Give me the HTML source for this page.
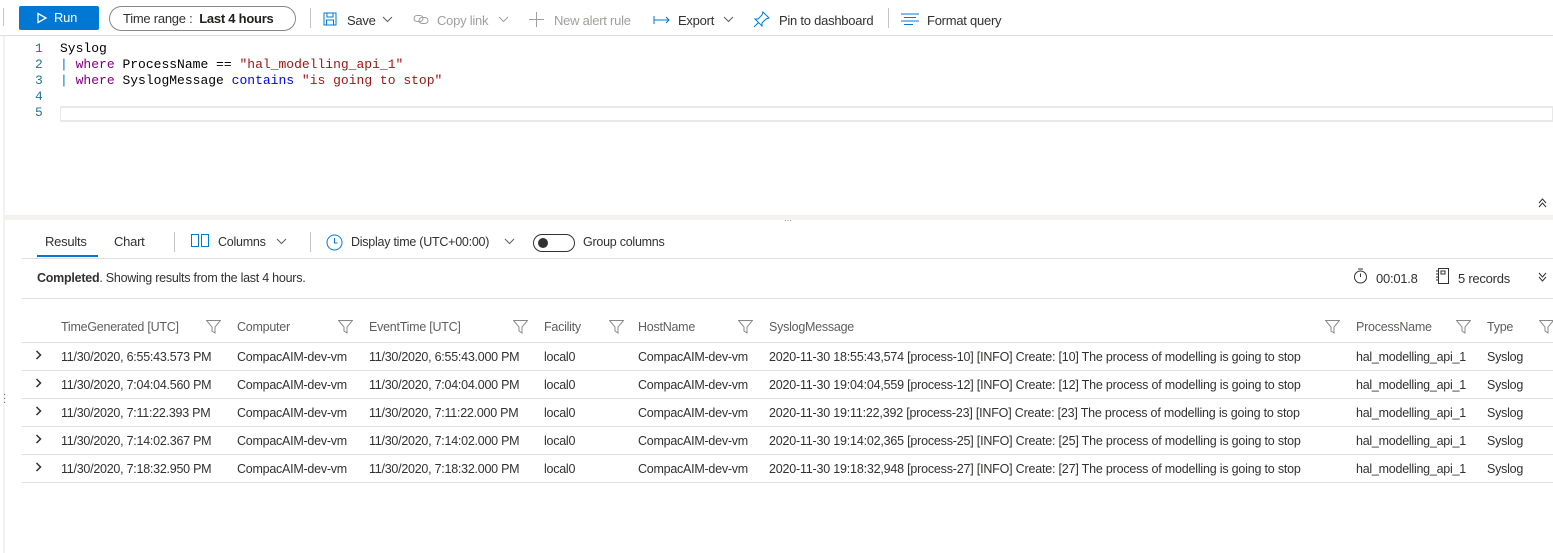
<!DOCTYPE html>
<html><head><meta charset="utf-8"><style>
*{box-sizing:border-box;margin:0;padding:0}
body{width:1553px;height:553px;background:#fff;position:relative;overflow:hidden;font-family:"Liberation Sans",sans-serif;font-size:12.5px;color:#323130;letter-spacing:-0.25px}
.a{position:absolute;white-space:nowrap}
.m{font-family:"Liberation Mono",monospace;font-size:13px;letter-spacing:0px}
.hl{position:absolute;height:1px;background:#e1dfdd}
.hd{color:#605e5c}
svg{position:absolute}
</style></head><body>
<!-- toolbar -->
<div class="a" style="left:3px;top:8px;width:1px;height:18px;background:#c8c6c4"></div>
<div class="a" style="left:19px;top:6px;width:80px;height:24px;background:#0078d4;border-radius:2px;color:#fff;font-size:13px;line-height:23px;padding-left:35px">Run</div>
<svg style="left:36px;top:12px" width="12" height="12" viewBox="0 0 12 12"><path d="M2 1.5L10 6L2 10.5Z" fill="none" stroke="#fff" stroke-width="1.3"/></svg>
<div class="a" style="left:109px;top:6px;width:187px;height:25px;border:1px solid #8a8886;border-radius:13px;line-height:24px;padding-left:13px;font-size:13px">Time range :&nbsp; <span style="color:#201f1e;font-weight:600">Last 4 hours</span></div>
<div class="a" style="left:310px;top:8px;width:1px;height:20px;background:#c8c6c4"></div>
<svg style="left:323px;top:12px" width="14" height="14" viewBox="0 0 14 14"><rect x="1" y="1" width="12" height="12" fill="none" stroke="#0078d4"/><rect x="4" y="1" width="6" height="4" fill="none" stroke="#0078d4"/><rect x="3.5" y="8" width="7" height="5" fill="none" stroke="#0078d4"/></svg>
<div class="a" style="left:347px;top:13px;font-size:13px">Save</div>
<svg style="left:382px;top:16px" width="11" height="7"><path d="M1 1L5.5 5.5L10 1" fill="none" stroke="#605e5c"/></svg>
<svg style="left:413px;top:14px" width="17" height="11"><rect x="1" y="1.5" width="9" height="6" rx="3" fill="none" stroke="#a19f9d"/><rect x="6" y="3.5" width="9" height="6" rx="3" fill="none" stroke="#a19f9d"/></svg>
<div class="a" style="left:437px;top:13px;color:#a19f9d;font-size:13px">Copy link</div>
<svg style="left:498px;top:16px" width="11" height="7"><path d="M1 1L5.5 5.5L10 1" fill="none" stroke="#a19f9d"/></svg>
<svg style="left:529px;top:12px" width="15" height="15"><path d="M7.5 0V15M0 7.5H15" stroke="#a19f9d"/></svg>
<div class="a" style="left:554px;top:13px;color:#a19f9d;font-size:13px">New alert rule</div>
<svg style="left:653px;top:16px" width="18" height="8"><path d="M1 0V8M1 4H16M13 1L16 4L13 7" fill="none" stroke="#0078d4"/></svg>
<div class="a" style="left:678px;top:13px;font-size:13px">Export</div>
<svg style="left:723px;top:16px" width="11" height="7"><path d="M1 1L5.5 5.5L10 1" fill="none" stroke="#605e5c"/></svg>
<svg style="left:753px;top:11px" width="17" height="17"><path d="M10 1L16 7L13 8L9 12L9 15L2 8L5 8L9 4Z M5.5 11.5L1 16" fill="none" stroke="#0078d4"/></svg>
<div class="a" style="left:779px;top:13px;font-size:13px">Pin to dashboard</div>
<div class="a" style="left:888px;top:8px;width:1px;height:20px;background:#c8c6c4"></div>
<svg style="left:901px;top:13px" width="18" height="12"><path d="M0 1H18M3 4.5H15M0 8H18M3 11.5H12" stroke="#0078d4"/></svg>
<div class="a" style="left:927px;top:13px;font-size:13px">Format query</div>
<div class="hl" style="left:0;top:35px;width:1553px;background:#e1dfdd"></div>
<!-- editor -->
<div class="a" style="left:3px;top:36px;width:2px;height:517px;background:#f3f2f1"></div>
<div class="a" style="left:60px;top:106px;width:1493px;height:16px;border:1px solid #e8e8e8;border-bottom-width:2px;border-top-width:2px"></div>
<div class="a m" style="left:35px;top:41px;line-height:16px;color:#237893;text-align:right">1<br>2<br>3<br>4<br>5</div>
<div class="a m" style="left:60px;top:41px;line-height:16px;color:#000">Syslog<br><span style="color:#0078d4">|</span> <span style="color:#800080">where</span> ProcessName == <span style="color:#a31515">"hal_modelling_api_1"</span><br><span style="color:#0078d4">|</span> <span style="color:#800080">where</span> SyslogMessage <span style="color:#0000ff">contains</span> <span style="color:#a31515">"is going to stop"</span></div>
<svg style="left:1538px;top:198px" width="9" height="10"><path d="M1 5L4.5 1L8 5M1 9L4.5 5L8 9" fill="none" stroke="#323130"/></svg>
<div class="a" style="left:5px;top:215px;width:1548px;height:5px;background:#f3f2f1"></div>
<div class="a" style="left:784px;top:216px;font-size:8px;color:#605e5c;letter-spacing:0">···</div>
<div class="a" style="left:3px;top:393px;font-size:10px;color:#605e5c;line-height:4px;letter-spacing:0">·<br>·<br>·</div>
<!-- results tabs -->
<div class="a" style="left:45px;top:234px;font-size:13px">Results</div>
<div class="a" style="left:37px;top:255px;width:61px;height:2px;background:#0078d4"></div>
<div class="a" style="left:114px;top:234px;font-size:13px">Chart</div>
<div class="a" style="left:174px;top:232px;width:1px;height:20px;background:#c8c6c4"></div>
<svg style="left:191px;top:234px" width="19" height="13"><rect x="0.5" y="0.5" width="7" height="12" fill="none" stroke="#0078d4"/><rect x="10.5" y="0.5" width="7" height="12" fill="none" stroke="#0078d4"/></svg>
<div class="a" style="left:218px;top:235px">Columns</div>
<svg style="left:276px;top:238px" width="11" height="7"><path d="M1 1L5.5 5.5L10 1" fill="none" stroke="#605e5c"/></svg>
<div class="a" style="left:310px;top:232px;width:1px;height:20px;background:#c8c6c4"></div>
<svg style="left:326px;top:234px" width="17" height="17"><circle cx="8.5" cy="8.5" r="7.5" fill="none" stroke="#0078d4"/><path d="M8.5 4V9H11.5" fill="none" stroke="#0078d4"/></svg>
<div class="a" style="left:351px;top:235px">Display time (UTC+00:00)</div>
<svg style="left:504px;top:238px" width="11" height="7"><path d="M1 1L5.5 5.5L10 1" fill="none" stroke="#605e5c"/></svg>
<div class="a" style="left:533px;top:234px;width:42px;height:18px;border:1px solid #323130;border-radius:9px"></div>
<div class="a" style="left:538px;top:238px;width:10px;height:10px;border-radius:5px;background:#323130"></div>
<div class="a" style="left:583px;top:235px">Group columns</div>
<div class="hl" style="left:22px;top:258px;width:1531px"></div>
<!-- status -->
<div class="a" style="left:37px;top:271px"><b style="font-weight:bold">Completed</b>. Showing results from the last 4 hours.</div>
<svg style="left:1353px;top:268px" width="15" height="16"><circle cx="7.5" cy="9" r="6" fill="none" stroke="#323130"/><path d="M5 1H10M7.5 9V5.5" fill="none" stroke="#323130"/></svg>
<div class="a" style="left:1376px;top:271px;font-size:13px">00:01.8</div>
<svg style="left:1436px;top:268px" width="13" height="16"><rect x="2.5" y="0.5" width="10" height="15" fill="none" stroke="#323130"/><path d="M0 3H3M0 6H3M0 9H3M0 12H3M5 3H9V6H5Z" fill="none" stroke="#323130"/></svg>
<div class="a" style="left:1458px;top:271px;font-size:13px">5 records</div>
<svg style="left:1538px;top:272px" width="9" height="10"><path d="M1 1L4.5 5L8 1M1 5L4.5 9L8 5" fill="none" stroke="#323130"/></svg>
<div class="hl" style="left:22px;top:298px;width:1531px"></div>
<!-- header -->
<div class="a hd" style="left:61px;top:320px">TimeGenerated [UTC]</div>
<div class="a hd" style="left:237px;top:320px">Computer</div>
<div class="a hd" style="left:369px;top:320px">EventTime [UTC]</div>
<div class="a hd" style="left:544px;top:320px">Facility</div>
<div class="a hd" style="left:638px;top:320px">HostName</div>
<div class="a hd" style="left:769px;top:320px">SyslogMessage</div>
<div class="a hd" style="left:1356px;top:320px">ProcessName</div>
<div class="a hd" style="left:1487px;top:320px">Type</div>
<svg style="left:206px;top:320px" width="15" height="14"><path d="M0.5 0.5H14.5L9 7V13L6 11V7Z" fill="none" stroke="#8a8886"/></svg>
<svg style="left:338px;top:320px" width="15" height="14"><path d="M0.5 0.5H14.5L9 7V13L6 11V7Z" fill="none" stroke="#8a8886"/></svg>
<svg style="left:513px;top:320px" width="15" height="14"><path d="M0.5 0.5H14.5L9 7V13L6 11V7Z" fill="none" stroke="#8a8886"/></svg>
<svg style="left:609px;top:320px" width="15" height="14"><path d="M0.5 0.5H14.5L9 7V13L6 11V7Z" fill="none" stroke="#8a8886"/></svg>
<svg style="left:738px;top:320px" width="15" height="14"><path d="M0.5 0.5H14.5L9 7V13L6 11V7Z" fill="none" stroke="#8a8886"/></svg>
<svg style="left:1325px;top:320px" width="15" height="14"><path d="M0.5 0.5H14.5L9 7V13L6 11V7Z" fill="none" stroke="#8a8886"/></svg>
<svg style="left:1456px;top:320px" width="15" height="14"><path d="M0.5 0.5H14.5L9 7V13L6 11V7Z" fill="none" stroke="#8a8886"/></svg>
<svg style="left:1539px;top:320px" width="15" height="14"><path d="M0.5 0.5H14.5L9 7V13L6 11V7Z" fill="none" stroke="#8a8886"/></svg>
<div class="hl" style="left:22px;top:342px;width:1531px"></div>
<!-- rows -->
<div id="rows"></div>
<script>
var d=[["6:55:43.573","6:55:43.000","18:55:43,574","10"],["7:04:04.560","7:04:04.000","19:04:04,559","12"],["7:11:22.393","7:11:22.000","19:11:22,392","23"],["7:14:02.367","7:14:02.000","19:14:02,365","25"],["7:18:32.950","7:18:32.000","19:18:32,948","27"]];
var h="";d.forEach(function(r,i){var t=350+i*28;
h+='<svg style="left:35px;top:'+(t)+'px" width="7" height="10"><path d="M1.5 1L5.5 5L1.5 9" fill="none" stroke="#323130" stroke-width="1.5"/></svg>';
h+='<div class="a" style="left:61px;top:'+t+'px">11/30/2020, '+r[0]+' PM</div>';
h+='<div class="a" style="left:237px;top:'+t+'px">CompacAIM-dev-vm</div>';
h+='<div class="a" style="left:369px;top:'+t+'px">11/30/2020, '+r[1]+' PM</div>';
h+='<div class="a" style="left:544px;top:'+t+'px">local0</div>';
h+='<div class="a" style="left:638px;top:'+t+'px">CompacAIM-dev-vm</div>';
h+='<div class="a" style="left:769px;top:'+t+'px;letter-spacing:-0.2px">2020-11-30 '+r[2]+' [process-'+r[3]+'] [INFO] Create: ['+r[3]+'] The process of modelling is going to stop</div>';
h+='<div class="a" style="left:1356px;top:'+t+'px">hal_modelling_api_1</div>';
h+='<div class="a" style="left:1487px;top:'+t+'px">Syslog</div>';
h+='<div class="hl" style="left:22px;top:'+(t+20)+'px;width:1531px"></div>';});
document.getElementById("rows").innerHTML=h;
</script>
</body></html>
